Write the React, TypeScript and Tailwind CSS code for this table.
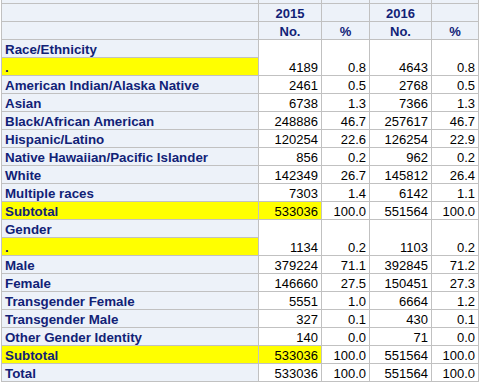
import React from "react";

type Row = { label: string; n15: string; p15: string; n16: string; p16: string; yellow?: boolean };

const race: Row[] = [
  { label: "American Indian/Alaska Native", n15: "2461", p15: "0.5", n16: "2768", p16: "0.5" },
  { label: "Asian", n15: "6738", p15: "1.3", n16: "7366", p16: "1.3" },
  { label: "Black/African American", n15: "248886", p15: "46.7", n16: "257617", p16: "46.7" },
  { label: "Hispanic/Latino", n15: "120254", p15: "22.6", n16: "126254", p16: "22.9" },
  { label: "Native Hawaiian/Pacific Islander", n15: "856", p15: "0.2", n16: "962", p16: "0.2" },
  { label: "White", n15: "142349", p15: "26.7", n16: "145812", p16: "26.4" },
  { label: "Multiple races", n15: "7303", p15: "1.4", n16: "6142", p16: "1.1" },
  { label: "Subtotal", n15: "533036", p15: "100.0", n16: "551564", p16: "100.0", yellow: true },
];

const gender: Row[] = [
  { label: "Male", n15: "379224", p15: "71.1", n16: "392845", p16: "71.2" },
  { label: "Female", n15: "146660", p15: "27.5", n16: "150451", p16: "27.3" },
  { label: "Transgender Female", n15: "5551", p15: "1.0", n16: "6664", p16: "1.2" },
  { label: "Transgender Male", n15: "327", p15: "0.1", n16: "430", p16: "0.1" },
  { label: "Other Gender Identity", n15: "140", p15: "0.0", n16: "71", p16: "0.0" },
  { label: "Subtotal", n15: "533036", p15: "100.0", n16: "551564", p16: "100.0", yellow: true },
];

const font = { fontFamily: '"Liberation Sans", Arial, sans-serif' };

const Label = ({ children, yellow }: { children?: React.ReactNode; yellow?: boolean }) => (
  <div
    className={`flex items-end pb-[1px] px-[3px] text-[13.33px] font-bold leading-none text-[#112277] whitespace-nowrap ${
      yellow ? "bg-[#ffff00]" : "bg-[#edf2f9]"
    }`}
  >
    {children}
  </div>
);

const Num = ({ children, yellow, span }: { children?: React.ReactNode; yellow?: boolean; span?: boolean }) => (
  <div
    className={`flex items-end justify-end pb-[1px] pr-[3px] text-[13px] leading-none text-black ${
      yellow ? "bg-[#ffff00]" : "bg-white"
    } ${span ? "row-span-2" : ""}`}
  >
    {children}
  </div>
);

const Head = ({ children }: { children?: React.ReactNode }) => (
  <div className="flex items-end justify-center pb-[1px] text-[13px] font-bold leading-none text-[#112277] bg-[#edf2f9]">
    {children}
  </div>
);

const DataRow = ({ r }: { r: Row }) => (
  <>
    <Label yellow={r.yellow}>{r.label}</Label>
    <Num yellow={r.yellow}>{r.n15}</Num>
    <Num>{r.p15}</Num>
    <Num>{r.n16}</Num>
    <Num>{r.p16}</Num>
  </>
);

const Section = ({ title, first, rows }: { title: string; first: Row; rows: Row[] }) => (
  <>
    <Label>{title}</Label>
    <Num span>{first.n15}</Num>
    <Num span>{first.p15}</Num>
    <Num span>{first.n16}</Num>
    <Num span>{first.p16}</Num>
    <Label yellow>.</Label>
    {rows.map((r, i) => (
      <DataRow key={i} r={r} />
    ))}
  </>
);

export default function App() {
  return (
    <div className="bg-white w-[479px] h-[384px]" style={font}>
      <div className="ml-px w-fit grid grid-cols-[256px_62px_47px_61px_46px] grid-rows-[3px_repeat(21,17px)] gap-px bg-[#c1c1c1] px-px pb-px">
        {/* cropped row above the header */}
        <div className="bg-[#edf2f9]" />
        <div className="bg-[#edf2f9]" />
        <div className="bg-[#edf2f9]" />
        <div className="bg-[#edf2f9]" />
        <div className="bg-[#edf2f9]" />

        <Head />
        <Head>2015</Head>
        <Head />
        <Head>2016</Head>
        <Head />

        <Head />
        <Head>No.</Head>
        <Head>%</Head>
        <Head>No.</Head>
        <Head>%</Head>

        <Section
          title="Race/Ethnicity"
          first={{ label: ".", n15: "4189", p15: "0.8", n16: "4643", p16: "0.8" }}
          rows={race}
        />
        <Section
          title="Gender"
          first={{ label: ".", n15: "1134", p15: "0.2", n16: "1103", p16: "0.2" }}
          rows={gender}
        />
        <DataRow r={{ label: "Total", n15: "533036", p15: "100.0", n16: "551564", p16: "100.0" }} />
      </div>
    </div>
  );
}
